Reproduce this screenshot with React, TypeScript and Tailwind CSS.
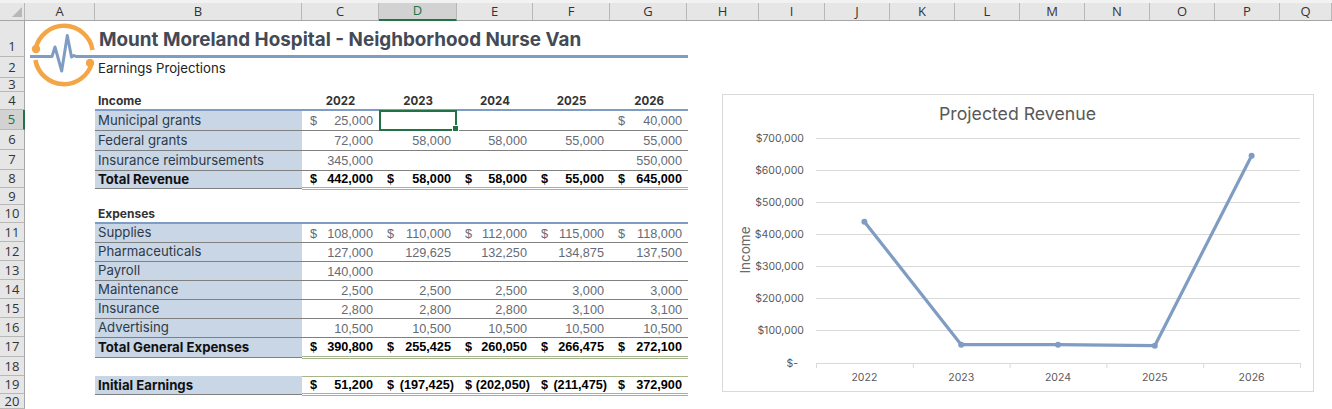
import React from "react";

const colHeads: [string, number][] = [["A",70],["B",207],["C",77],["D",78],["E",76],["F",77],["G",77],["H",72],["I",66],["J",65],["K",65],["L",65],["M",65],["N",65],["O",65],["P",65],["Q",52]];
const rowHeads: [number, number][] = [[1,36],[2,21],[3,14],[4,18],[5,20],[6,20],[7,20],[8,18],[9,17],[10,18],[11,19],[12,19],[13,19],[14,19],[15,19],[16,19],[17,20],[18,19],[19,18],[20,15]];

const F = "font-['Inter','Liberation_Sans',sans-serif]";

type V = { d?: boolean; t?: string; neg?: boolean } | null;
const v = (t: string, d = false, neg = false): V => ({ t, d, neg });

function Val({ c, bold, cls }: { c: V; bold?: boolean; cls: string }) {
  return (
    <div className={`flex items-center justify-between pl-2 font-['Liberation_Sans',sans-serif] text-[12.7px] ${c?.neg ? "pr-[3px]" : "pr-[6px]"} ${bold ? "pt-[2px] font-bold text-black" : "pt-[3px] text-[#646b76]"} ${cls}`}>
      <span>{c?.d ? "$" : ""}</span>
      <span>{c?.t ?? ""}</span>
    </div>
  );
}

function DataRow({ label, vals, lower }: { label: string; vals: V[]; lower?: boolean }) {
  return (
    <>
      <div />
      <div className={`bg-[#c9d6e6] border-b border-[#808080] pl-[3px] flex items-center text-[13.2px] text-[#2f3a47] ${lower ? "pt-px" : ""}`}>{label}</div>
      {vals.map((c, i) => (
        <Val key={i} c={c} cls="border-b border-[#808080]" />
      ))}
    </>
  );
}

function TotalRow({ label, vals, top }: { label: string; vals: V[]; top?: boolean }) {
  return (
    <>
      <div />
      <div className="bg-[#c9d6e6] border-b border-[#808080] mb-px pl-[3px] pt-px flex items-center font-bold text-[13.2px] text-[#111]">{label}</div>
      {vals.map((c, i) => (
        <Val key={i} c={c} bold cls={`border-b-[3px] border-double border-[#a6b58c] ${top ? "border-t border-t-[#a6b58c]" : ""}`} />
      ))}
    </>
  );
}

function HeadRow({ label, years }: { label: string; years?: string[] }) {
  return (
    <>
      <div />
      <div className="border-b-2 border-[#7f9cc3] pl-[3px] pb-px flex items-end font-bold text-[12px] leading-[14px] text-[#333]">{label}</div>
      {[0, 1, 2, 3, 4].map((i) => (
        <div key={i} className="border-b-2 border-[#7f9cc3] pb-px flex items-end justify-center font-bold text-[11.5px] leading-[14px] text-[#333]">
          {years ? years[i] : ""}
        </div>
      ))}
    </>
  );
}

function Blank() {
  return <div className="col-span-7" />;
}

const pts: [number, number][] = [[141.4,126.7],[238.2,249.7],[335,249.7],[431.8,250.7],[528.6,60.7]];

function Chart() {
  const gx0 = 93, gx1 = 577;
  const labels = ["$700,000","$600,000","$500,000","$400,000","$300,000","$200,000","$100,000"];
  return (
    <div className="absolute left-[722px] top-[94px] w-[592px] h-[298px] bg-white border border-[#d9d9d9]">
      <svg width="590" height="296" className="block">
        <text x="294.5" y="25" textAnchor="middle" fontFamily="Inter, sans-serif" fontSize="17.7" fill="#595959">Projected Revenue</text>
        <text transform="translate(27 155) rotate(-90)" textAnchor="middle" fontFamily="Inter, sans-serif" fontSize="13.5" fill="#6b6b6b">Income</text>
        {labels.map((l, i) => {
          const y = 43.5 + i * 32;
          return (
            <g key={l}>
              <line x1={gx0} x2={gx1} y1={y} y2={y} stroke="#d9d9d9" strokeWidth="1" />
              <text x="81" y={y + 3.5} textAnchor="end" fontFamily="Inter, sans-serif" fontSize="10.5" fill="#595959">{l}</text>
            </g>
          );
        })}
        <text x="75" y="272" textAnchor="end" fontFamily="Inter, sans-serif" fontSize="10.5" fill="#595959">$-</text>
        <line x1={gx0} x2={gx1} y1="268.5" y2="268.5" stroke="#d9d9d9" />
        {[0,1,2,3,4,5].map((i) => (
          <line key={i} x1={gx0 + 0.5 + i * 96.8} x2={gx0 + 0.5 + i * 96.8} y1="268" y2="273" stroke="#d9d9d9" />
        ))}
        {["2022","2023","2024","2025","2026"].map((y, i) => (
          <text key={y} x={141.4 + i * 96.8} y="286" textAnchor="middle" fontFamily="Inter, sans-serif" fontSize="10.5" fill="#595959">{y}</text>
        ))}
        <polyline points={pts.map((p) => p.join(",")).join(" ")} fill="none" stroke="#7f9cc3" strokeWidth="3.2" strokeLinejoin="round" strokeLinecap="round" />
        {pts.map((p, i) => (
          <circle key={i} cx={p[0]} cy={p[1]} r="3" fill="#7f9cc3" />
        ))}
      </svg>
    </div>
  );
}

function Logo() {
  return (
    <svg className="absolute left-[28px] top-[20px]" width="72" height="70" viewBox="28 20 72 70" fill="none">
      <path d="M35.6 49 A29 29 0 0 1 92.6 50" stroke="#f4a646" strokeWidth="4.5" />
      <path d="M91.9 63 A29 29 0 0 1 35.4 60" stroke="#f4a646" strokeWidth="4.5" />
      <circle cx="36" cy="49" r="4.2" fill="#f4a646" />
      <circle cx="90" cy="63" r="4.2" fill="#f4a646" />
      <path d="M30 56.5 H52 L55 47 L61.7 71 L67.3 35.5 L71.5 57 L74 55.5 L76 56.5 H96" stroke="#7f9cc3" strokeWidth="3" strokeLinejoin="round" />
    </svg>
  );
}

export default function App() {
  return (
    <div className={`relative w-[1332px] h-[409px] overflow-hidden bg-white ${F}`}>
      {/* column headers */}
      <div className="h-[21px] flex bg-[#e6e6e6] border-t-[3px] border-t-[#f2f2f2] border-b border-b-[#a6a6a6] text-[13px] text-[#333] font-['Open_Sans',sans-serif]">
        <div className="w-[25px] shrink-0 relative border-r border-[#b8b8b8]">
          <div className="absolute right-[2px] bottom-[3px] w-0 h-0 border-l-[10px] border-b-[10px] border-l-transparent border-b-[#b8b8b8]" />
        </div>
        {colHeads.map(([n, w]) => (
          <div
            key={n}
            style={{ width: w }}
            className={`shrink-0 flex items-center justify-center border-r border-[#b8b8b8] ${n === "D" ? "bg-[#d2d2d2] text-[#217346] border-b-2 border-b-[#217346] h-[18px]" : ""}`}
          >
            {n}
          </div>
        ))}
      </div>

      <div className="flex">
        {/* row headers */}
        <div className="w-[25px] shrink-0 flex flex-col bg-[#e6e6e6] text-[13px] leading-[13px] text-[#333] font-['Open_Sans',sans-serif]">
          {rowHeads.map(([n, h]) => (
            <div
              key={n}
              style={{ height: h }}
              className={`shrink-0 flex items-center justify-center border-b border-[#b8b8b8] ${n === 1 ? "pt-[16px]" : ""} ${n === 5 ? "bg-[#d2d2d2] text-[#217346] border-r-2 border-r-[#217346]" : "border-r border-r-[#a6a6a6]"}`}
            >
              {n}
            </div>
          ))}
        </div>

        {/* sheet */}
        <div className="grid grid-cols-[70px_207px_77px_78px_76px_77px_78px] grid-rows-[37px_20px_15px_18px_20px_20px_20px_19px_16px_18px_19px_19px_19px_19px_19px_19px_21px_17px_20px_13px] w-[663px]">
          <div />
          <div className="col-span-6 border-b-[3px] border-[#7f9cc3] pl-1 pt-[4px] flex items-center text-[18.85px] font-bold text-[#434a56]">
            Mount Moreland Hospital - Neighborhood Nurse Van
          </div>
          <div />
          <div className="col-span-6 pl-[3px] pt-[2px] flex items-center text-[13.2px] text-[#222]">Earnings Projections</div>
          <Blank />
          <HeadRow label="Income" years={["2022","2023","2024","2025","2026"]} />

          <>
            <div />
            <div className="bg-[#c9d6e6] border-b border-[#808080] pl-[3px] pt-px flex items-center text-[13.2px] text-[#2f3a47]">Municipal grants</div>
            <Val c={v("25,000", true)} cls="border-b border-[#808080]" />
            <div className="relative border-b border-[#808080]">
              <div className="absolute left-0 -top-px w-[78px] h-[21px] border-2 border-[#217346]" />
              <div className="absolute -right-[2px] -bottom-[2px] w-[5px] h-[5px] bg-[#217346] border border-white box-content" />
            </div>
            <Val c={null} cls="border-b border-[#808080]" />
            <Val c={null} cls="border-b border-[#808080]" />
            <Val c={v("40,000", true)} cls="border-b border-[#808080]" />
          </>
          <DataRow lower label="Federal grants" vals={[v("72,000"),v("58,000"),v("58,000"),v("55,000"),v("55,000")]} />
          <DataRow lower label="Insurance reimbursements" vals={[v("345,000"),null,null,null,v("550,000")]} />
          <TotalRow label="Total Revenue" vals={[v("442,000",true),v("58,000",true),v("58,000",true),v("55,000",true),v("645,000",true)]} />
          <Blank />
          <HeadRow label="Expenses" />
          <DataRow label="Supplies" vals={[v("108,000",true),v("110,000",true),v("112,000",true),v("115,000",true),v("118,000",true)]} />
          <DataRow label="Pharmaceuticals" vals={[v("127,000"),v("129,625"),v("132,250"),v("134,875"),v("137,500")]} />
          <DataRow label="Payroll" vals={[v("140,000"),null,null,null,null]} />
          <DataRow label="Maintenance" vals={[v("2,500"),v("2,500"),v("2,500"),v("3,000"),v("3,000")]} />
          <DataRow label="Insurance" vals={[v("2,800"),v("2,800"),v("2,800"),v("3,100"),v("3,100")]} />
          <DataRow label="Advertising" vals={[v("10,500"),v("10,500"),v("10,500"),v("10,500"),v("10,500")]} />
          <TotalRow label="Total General Expenses" vals={[v("390,800",true),v("255,425",true),v("260,050",true),v("266,475",true),v("272,100",true)]} />
          <Blank />
          <TotalRow top label="Initial Earnings" vals={[v("51,200",true),v("(197,425)",true,true),v("(202,050)",true,true),v("(211,475)",true,true),v("372,900",true)]} />
        </div>
      </div>

      <Logo />
      <Chart />
    </div>
  );
}
